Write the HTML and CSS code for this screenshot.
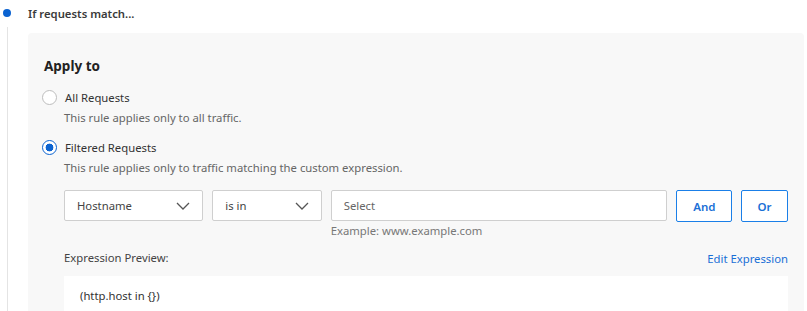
FILE: index.html
```html
<!DOCTYPE html>
<html lang="en">
<head>
    <meta charset="UTF-8">
    <title>Rule - Apply to</title>
    <link rel="stylesheet" href="styles.css">
</head>
<body>
    <div class="step">
        <div class="step-header">
            <span class="step-dot"></span>
            <span class="step-title">If requests match...</span>
        </div>
        <div class="step-body">
            <div class="panel">
                <h2>Apply to</h2>

                <label class="radio-row">
                    <input type="radio" name="apply">
                    <span class="radio-label">All Requests</span>
                </label>
                <div class="radio-desc">This rule applies only to all traffic.</div>

                <label class="radio-row">
                    <input type="radio" name="apply" checked>
                    <span class="radio-label">Filtered Requests</span>
                </label>
                <div class="radio-desc">This rule applies only to traffic matching the custom expression.</div>

                <div class="filter-row">
                    <div class="select field-name">
                        <span>Hostname</span>
                        <svg width="14" height="8" viewBox="0 0 14 8"><path d="M1 1l6 6 6-6" fill="none" stroke="#555" stroke-width="1.3"/></svg>
                    </div>
                    <div class="select field-op">
                        <span>is in</span>
                        <svg width="14" height="8" viewBox="0 0 14 8"><path d="M1 1l6 6 6-6" fill="none" stroke="#555" stroke-width="1.3"/></svg>
                    </div>
                    <div class="value-col">
                        <div class="select field-value"><span class="placeholder">Select</span></div>
                        <div class="hint">Example: www.example.com</div>
                    </div>
                    <button class="btn-outline btn-and">And</button>
                    <button class="btn-outline btn-or">Or</button>
                </div>

                <div class="preview-head">
                    <span>Expression Preview:</span>
                    <a href="#" class="edit-link">Edit Expression</a>
                </div>
                <div class="preview-box">(http.host in {})</div>
            </div>
        </div>
    </div>
</body>
</html>
```

FILE: styles.css
```css
body {
    font-family: "Segoe UI", "Noto Sans", sans-serif;
    font-size: 11.3px;
    color: #333;
    margin: 0;
    background: #fff;
    height: 311px;
    overflow: hidden;
}

.step-header {
    display: flex;
    align-items: center;
    height: 27px;
}

.step-dot {
    width: 8px;
    height: 8px;
    border-radius: 50%;
    background: #0b63d1;
    margin-left: 3px;
    margin-top: -1px;
}

.step-title {
    margin-left: 17px;
    font-weight: 600;
    color: #3a3a3a;
}

.step-body {
    margin-left: 7px;
    border-left: 1px solid #e4e4e4;
    padding: 6px 0 0 20px;
}

.panel {
    background: #f8f8f8;
    border-radius: 4px;
    padding: 23px 16px 0 16px;
    margin-right: 3px;
}

h2 {
    font-size: 13.5px;
    font-weight: 700;
    color: #222;
    margin: 0 0 11px 0;
    line-height: 20px;
}

.radio-row {
    display: flex;
    align-items: center;
    height: 20px;
}

.radio-row input {
    appearance: none;
    box-sizing: border-box;
    margin: 0 0 0 -2px;
    width: 15px;
    height: 15px;
    border: 1px solid #bdbdbd;
    border-radius: 50%;
    background: #fff;
}

.radio-row input:checked {
    border: 1.5px solid #0b63d1;
    background: radial-gradient(circle, #0b63d1 0 3.6px, #fff 4.2px);
}

.radio-label {
    margin-left: 8px;
    color: #333;
}

.radio-desc {
    margin-left: 20px;
    color: #666;
    line-height: 20px;
    margin-top: 1px;
    margin-bottom: 9px;
}

.filter-row {
    display: flex;
    align-items: flex-start;
    gap: 9px;
    margin-left: 20px;
    margin-top: 12px;
}

.select {
    box-sizing: border-box;
    height: 31px;
    background: #fff;
    border: 1px solid #cfcfcf;
    border-radius: 2px;
    display: flex;
    align-items: center;
    justify-content: space-between;
    padding: 0 12px;
    color: #444;
}

.field-name {
    width: 140px;
}

.field-op {
    width: 110px;
}

.value-col {
    width: 339px;
}

.placeholder {
    color: #666;
}

.hint {
    color: #777;
    line-height: 20px;
}

.btn-outline {
    box-sizing: border-box;
    height: 32px;
    background: #fff;
    border: 1px solid #1a7fe8;
    border-radius: 2px;
    color: #1a6fd6;
    font-family: inherit;
    font-size: 11.5px;
    font-weight: 600;
    cursor: pointer;
}

.btn-and {
    width: 56px;
}

.btn-or {
    width: 47px;
}

.preview-head {
    display: flex;
    justify-content: space-between;
    align-items: center;
    margin-left: 20px;
    margin-top: 3px;
    height: 26px;
    color: #444;
}

.edit-link {
    color: #1a6fd6;
    text-decoration: none;
    margin-top: 2px;
}

.preview-box {
    margin-left: 20px;
    margin-top: 6px;
    background: #fff;
    padding: 12px 16px;
    color: #333;
    height: 40px;
}
```
